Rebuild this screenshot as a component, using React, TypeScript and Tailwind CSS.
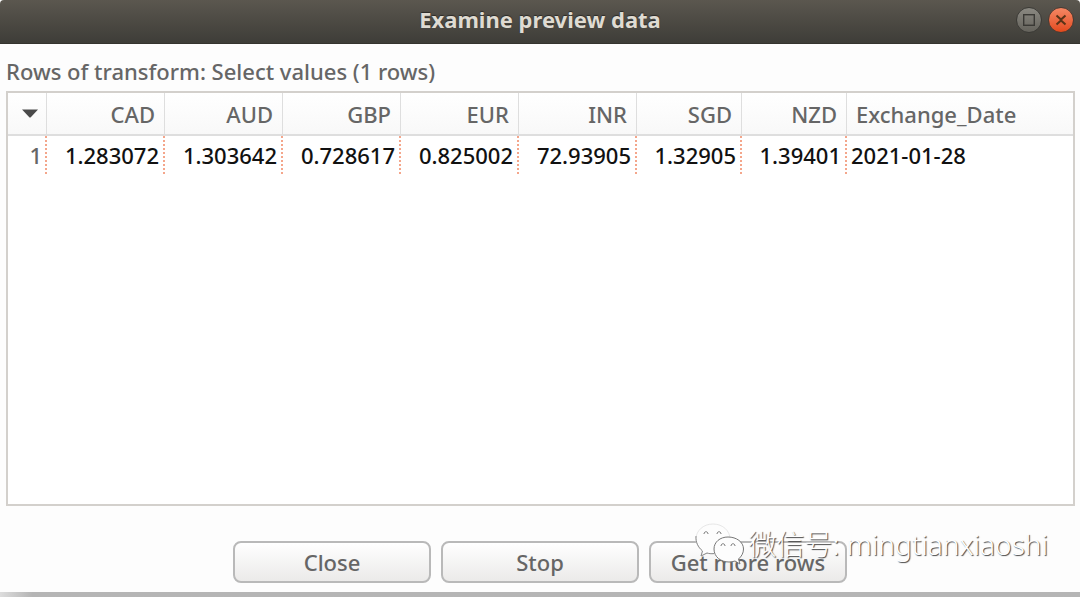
import React from 'react';

interface Column {
  name: string;
  value: string;
  width: string;
  align: string;
}

const columns: Column[] = [
  { name: 'CAD', value: '1.283072', width: 'w-[118px]', align: 'text-right' },
  { name: 'AUD', value: '1.303642', width: 'w-[118px]', align: 'text-right' },
  { name: 'GBP', value: '0.728617', width: 'w-[118px]', align: 'text-right' },
  { name: 'EUR', value: '0.825002', width: 'w-[118px]', align: 'text-right' },
  { name: 'INR', value: '72.93905', width: 'w-[118px]', align: 'text-right' },
  { name: 'SGD', value: '1.32905', width: 'w-[105px]', align: 'text-right' },
  { name: 'NZD', value: '1.39401', width: 'w-[105px]', align: 'text-right' },
  { name: 'Exchange_Date', value: '2021-01-28', width: '', align: 'text-left' },
];

const TitleBar: React.FC = () => (
  <header className="relative flex h-11 items-center justify-center rounded-t border-b border-[#35342f] bg-linear-to-b from-[#5b574f] to-[#3e3d38] pb-1.5">
    <h1 className="text-[22px] font-bold text-[#dfdbd2] [text-shadow:0_-1px_1px_#2b2a27]">
      Examine preview data
    </h1>
    <div className="absolute top-[7px] right-1.5 flex gap-1.5">
      <button
        type="button"
        aria-label="Maximize"
        className="flex size-[26px] items-center justify-center rounded-full border border-[#3b3a36] bg-linear-to-b from-[#8b8982] to-[#64625b]"
      >
        <svg viewBox="0 0 12 12" className="size-3" fill="none" stroke="#3a3935" strokeWidth="1.4">
          <rect x="0.7" y="0.7" width="10.6" height="10.6" />
        </svg>
      </button>
      <button
        type="button"
        aria-label="Close window"
        className="flex size-[26px] items-center justify-center rounded-full border border-[#4a3a32] bg-linear-to-b from-[#f58763] to-[#e2491a]"
      >
        <svg viewBox="0 0 12 12" className="size-3" fill="none" stroke="#5a3317" strokeWidth="2">
          <path d="M1.500 1.500 6 5.600 10.500 1.500M1.500 10.500 6 6.400 10.500 10.500M5 6h2" />
        </svg>
      </button>
    </div>
  </header>
);

const PreviewTable: React.FC = () => (
  <div className="mr-[5px] ml-1.5 flex-1 border-2 border-[#d3d0cc] bg-white">
    <table aria-label="Preview rows" className="w-full table-fixed border-separate border-spacing-0">
      <thead>
        <tr className="h-[43px] bg-linear-to-b from-white to-[#f8f8f8] text-[#666666]">
          <th className="w-[39px] border-r border-b-2 border-r-[#dedede] border-b-[#dedede] p-0">
            <button type="button" aria-label="Sort rows" className="ml-1.5 flex w-8 items-center justify-center">
              <svg viewBox="0 0 16 9" className="h-[9px] w-4" fill="#4a4a4a">
                <path d="M0 0.5h16L8.5 8.5h-1z" />
              </svg>
            </button>
          </th>
          {columns.map((col) => (
            <th
              key={col.name}
              className={`border-r border-b-2 border-r-[#dedede] border-b-[#dedede] px-[9px] py-0 font-medium last:border-r-0 ${col.width} ${col.align}`}
            >
              {col.name}
            </th>
          ))}
        </tr>
      </thead>
      <tbody>
        <tr className="h-[38px] text-[#111111]">
          <td className="border-r-2 border-dotted border-[#f4a68b] py-0 pr-[3px] pl-0 text-right text-[#666666]">
            1
          </td>
          {columns.map((col) => (
            <td
              key={col.name}
              className={`border-r-2 border-dotted border-[#f4a68b] px-1 py-0 last:border-r-0 ${col.align}`}
            >
              {col.value}
            </td>
          ))}
        </tr>
      </tbody>
    </table>
  </div>
);

// WeChat account mark that floats over the bottom right corner
const Watermark: React.FC = () => (
  <div className="pointer-events-none absolute right-8 bottom-8 flex items-center gap-1">
    <svg viewBox="0 0 50 42" className="h-[42px] w-[50px]" fill="#fdfdfd" strokeLinejoin="round">
      <path
        d="M18 1C8 1 1 8 1 16c0 5 2.500 9 6.500 12L6 33l6-3c3 .8 6 .8 9 .4C30 29 35 23 35 16 35 8 28 1 18 1Z"
        stroke="#dddddd"
        strokeWidth="0.7"
      />
      <path d="M1 13c-.5 6 2 11 6.500 15L6 33l6-3c2 .7 4 .8 7 .6" fill="none" stroke="#8a8a8a" />
      <path d="M9 11c0-3 4-3 4 0M22 11c0-3 4-3 4 0" fill="none" stroke="#777777" />
      <path
        d="M33 14c-8 0-14 5-14 12 0 8 7 13 15 13 2 0 4-.3 6-1l5 3-1.500-5c3-2.500 5-6 5-10 0-7-7-12-15.500-12Z"
        stroke="#777777"
      />
      <path d="M26 23c0-3 4-3 4 0M36 23c0-3 4-3 4 0" fill="none" stroke="#777777" />
    </svg>
    <span className="text-[28px] leading-9 font-light whitespace-nowrap text-white [text-shadow:1px_1px_1px_#444444]">
      微信号: mingtianxiaoshi
    </span>
  </div>
);

const App: React.FC = () => {
  const actions = ['Close', 'Stop', 'Get more rows'];

  return (
    <div className="relative flex min-h-screen flex-col bg-[#fdfdfd] font-['Noto_Sans','Noto_Sans_CJK_SC',sans-serif] text-[22px] leading-8 font-medium">
      <TitleBar />
      <main className="flex flex-1 flex-col">
        <p className="px-1.5 pt-[11px] pb-1 text-[#666666]">Rows of transform: Select values (1 rows)</p>
        <PreviewTable />
        <div className="flex justify-center gap-2.5 pt-[35px] pb-[9px]">
          {actions.map((label) => (
            <button
              key={label}
              type="button"
              className="flex h-[42px] w-[198px] items-center justify-center rounded-lg border-2 border-[#b9b9b9] bg-linear-to-b from-white to-[#ebeae9] text-[#666666]"
            >
              {label}
            </button>
          ))}
        </div>
      </main>
      <div className="h-[5px] bg-linear-to-r from-[#dddddd] via-[#b5b5b5] via-3% to-[#b5b5b5]" />
      <Watermark />
    </div>
  );
};

export default App;
